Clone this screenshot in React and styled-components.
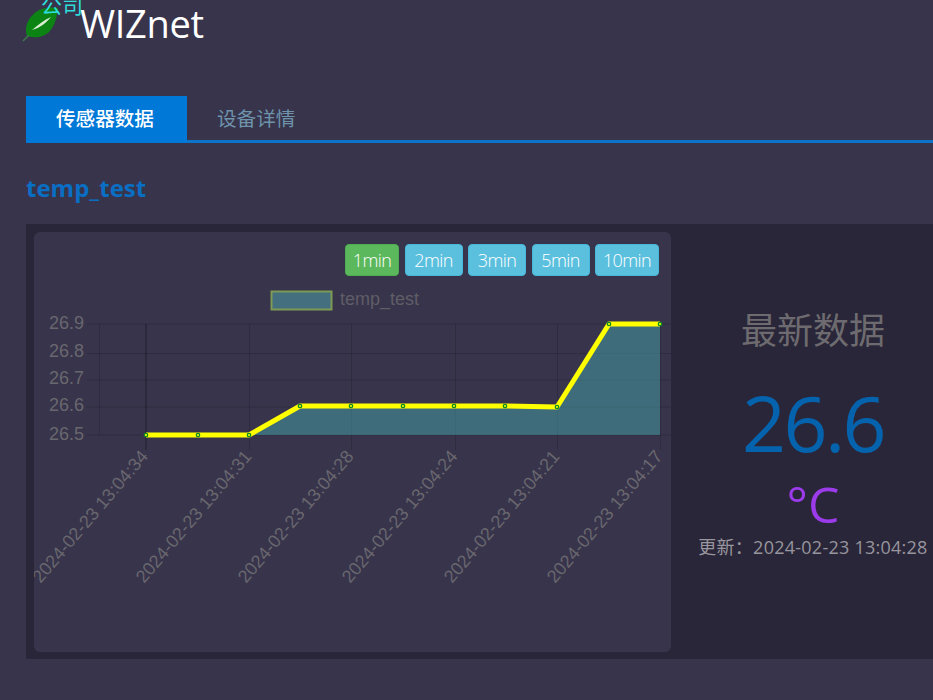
import React, { useState } from "react";
import styled, { createGlobalStyle } from "styled-components";

const UI_FONT = `"Open Sans", "Noto Sans CJK SC", sans-serif`;
const CHART_FONT = `"Liberation Sans", Arial, sans-serif`;

const GlobalStyle = createGlobalStyle`
  html, body {
    margin: 0;
    padding: 0;
    height: 700px;
    overflow: hidden;
    background: #37344b;
    font-family: ${UI_FONT};
  }
`;

const Page = styled.div`
  width: 933px;
  height: 700px;
  overflow: hidden;
  padding-left: 26px;
  box-sizing: border-box;
`;

const Header = styled.header`
  position: relative;
  height: 96px;
  display: flex;
  align-items: flex-start;
`;

const Leaf = styled.svg`
  width: 38px;
  height: 38px;
  margin: 5px 0 0 -4px;
  flex: none;
`;

const Brand = styled.h1`
  margin: 0 0 0 20px;
  font-size: 38px;
  line-height: 46px;
  font-weight: 400;
  letter-spacing: -0.3px;
  color: #fff;
`;

const CompanyTag = styled.span`
  position: absolute;
  left: 15px;
  top: -5px;
  font-size: 21px;
  line-height: 21px;
  color: #2fdcdc;
`;

const Tabs = styled.nav`
  display: flex;
  height: 44px;
  border-bottom: 3px solid #0b74c8;
`;

const Tab = styled.a`
  width: 161px;
  box-sizing: border-box;
  height: ${(p) => (p.$active ? "47px" : "44px")};
  padding-left: 30px;
  font-size: 19.6px;
  line-height: 46px;
  font-weight: ${(p) => (p.$active ? 500 : 400)};
  background: ${(p) => (p.$active ? "#0078d7" : "transparent")};
  color: ${(p) => (p.$active ? "#fff" : "#6e93ab")};
  cursor: pointer;
`;

const Title = styled.h2`
  margin: 26px 0 18px;
  font-size: 24px;
  line-height: 37px;
  font-weight: 700;
  color: #0a6fc4;
`;

const Panel = styled.section`
  width: 960px;
  height: 435px;
  box-sizing: border-box;
  padding: 8px;
  display: flex;
  background: #2a2639;
`;

const ChartCard = styled.div`
  width: 637px;
  height: 420px;
  flex: none;
  border-radius: 6px;
  background: #37344b;
`;

const RangeBar = styled.div`
  display: flex;
  justify-content: flex-end;
  gap: 5.5px;
  padding: 12px 12px 0;
`;

const RangeButton = styled.button`
  width: ${(p) => p.$width}px;
  height: 32px;
  padding: 0;
  border: 1px solid ${(p) => (p.$active ? "#4cae4c" : "#46b8da")};
  border-radius: 4px;
  background: ${(p) => (p.$active ? "#5cb85c" : "#5bc0de")};
  color: #fff;
  font-family: ${UI_FONT};
  font-size: 18px;
  font-weight: 300;
  letter-spacing: -0.6px;
  cursor: pointer;
`;

const ChartSvg = styled.svg`
  display: block;
  margin-top: 8px;
  font-family: ${CHART_FONT};
  font-size: 18px;
`;

const Latest = styled.aside`
  width: 284px;
  flex: none;
  display: flex;
  flex-direction: column;
  align-items: center;
  white-space: nowrap;
`;

const LatestLabel = styled.div`
  margin-top: 74px;
  font-size: 36px;
  line-height: 50px;
  color: #6d6b6f;
`;

const LatestValue = styled.div`
  margin-top: 14px;
  font-size: 77px;
  line-height: 106px;
  letter-spacing: -2.6px;
  color: #0563ae;
`;

const LatestUnit = styled.div`
  font-size: 50px;
  line-height: 56px;
  color: #9b3bea;
`;

const LatestTime = styled.div`
  margin-top: 2px;
  font-size: 18px;
  line-height: 26px;
  letter-spacing: 0.25px;
  color: #97959d;
`;

const ranges = [
  { label: "1min", width: 54 },
  { label: "2min", width: 58 },
  { label: "3min", width: 58 },
  { label: "5min", width: 58 },
  { label: "10min", width: 64 },
];

const yTicks = [
  { label: "26.9", y: 324, textY: 329 },
  { label: "26.8", y: 353.5, textY: 357 },
  { label: "26.7", y: 380, textY: 384 },
  { label: "26.6", y: 407, textY: 411 },
  { label: "26.5", y: 435, textY: 440 },
];

const xTicks = [
  { label: "2024-02-23 13:04:34", x: 146 },
  { label: "2024-02-23 13:04:31", x: 249.5 },
  { label: "2024-02-23 13:04:28", x: 351.5 },
  { label: "2024-02-23 13:04:24", x: 455.5 },
  { label: "2024-02-23 13:04:21", x: 557.5 },
  { label: "2024-02-23 13:04:17", x: 660.5 },
];

const points = [
  [146, 435], [198, 435], [249, 435], [300, 406], [351, 406], [403, 406],
  [454, 406], [505, 406], [557, 407], [609, 324], [660, 324],
];

const GRID = "rgba(0,0,0,0.14)";
const linePath = points.map(([x, y]) => `${x},${y}`).join(" ");
const areaPath = `146,435 ${linePath} 660,435`;

function TempChart() {
  return (
    <ChartSvg width="637" height="320" viewBox="34 284 637 320">
      <rect x="271.5" y="291.5" width="60" height="18" fill="#436f7e" stroke="#7f9a55" strokeWidth="2" />
      <text x="340" y="305" fill="#5f5d66">temp_test</text>

      {yTicks.map((t) => (
        <g key={t.label}>
          <line x1="87" x2="671" y1={t.y} y2={t.y} stroke={GRID} />
          <text x="84" y={t.textY} textAnchor="end" fill="#69676e">{t.label}</text>
        </g>
      ))}
      <line x1="99.5" x2="99.5" y1="324" y2="435" stroke={GRID} />
      {xTicks.map((t, i) => (
        <g key={t.label}>
          <line x1={t.x} x2={t.x} y1="324" y2="450" stroke={i === 0 ? "rgba(0,0,0,0.4)" : GRID} />
          <text
            x={t.x + 3}
            y="457"
            textAnchor="end"
            fill="#69676e"
            transform={`rotate(-49.5 ${t.x + 3} 457)`}
          >
            {t.label}
          </text>
        </g>
      ))}

      <polygon points={areaPath} fill="rgba(75,192,192,0.4)" />
      <polyline points={linePath} fill="none" stroke="#ffff00" strokeWidth="5" strokeLinejoin="round" />
      {points.map(([x, y]) => (
        <circle key={x} cx={x} cy={y} r="1.7" fill="#ffff00" stroke="#0b8a22" strokeWidth="1.3" />
      ))}
    </ChartSvg>
  );
}

export default function App() {
  const [range, setRange] = useState("1min");

  return (
    <Page>
      <GlobalStyle />
      <Header>
        <Leaf viewBox="0 0 38 38">
          <path d="M36 3C30 2 21 2 14 7C6 13 2 22 5 31C14 34 25 32 30 23C34 17 35 10 36 3Z" fill="#0b8414" />
          <path d="M10 25C16 20 22 15 29 12C24 18 18 23 10 25Z" fill="#d9efd2" />
          <path d="M7 30L1 36" stroke="#3c7a4a" strokeWidth="1.6" fill="none" />
        </Leaf>
        <Brand>WIZnet</Brand>
        <CompanyTag>公司</CompanyTag>
      </Header>

      <Tabs>
        <Tab $active>传感器数据</Tab>
        <Tab>设备详情</Tab>
      </Tabs>

      <Title>temp_test</Title>

      <Panel>
        <ChartCard>
          <RangeBar>
            {ranges.map((r) => (
              <RangeButton
                key={r.label}
                $width={r.width}
                $active={range === r.label}
                onClick={() => setRange(r.label)}
              >
                {r.label}
              </RangeButton>
            ))}
          </RangeBar>
          <TempChart />
        </ChartCard>
        <Latest>
          <LatestLabel>最新数据</LatestLabel>
          <LatestValue>26.6</LatestValue>
          <LatestUnit>°C</LatestUnit>
          <LatestTime>更新：2024-02-23 13:04:28</LatestTime>
        </Latest>
      </Panel>
    </Page>
  );
}
